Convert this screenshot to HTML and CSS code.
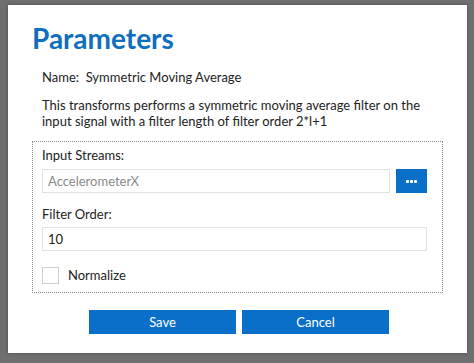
FILE: index.html
```html
<!DOCTYPE html>
<html>
<head>
<meta charset="utf-8">
<link rel="stylesheet" href="styles.css">
</head>
<body>
<div class="dialog">
  <h1 class="title">Parameters</h1>
  <div class="content">
    <p class="name">Name:&nbsp; Symmetric Moving Average</p>
    <p class="desc">This transforms performs a symmetric moving average filter on the input signal with a filter length of filter order 2*l+1</p>
  </div>
  <div class="group">
    <div class="label">Input Streams:</div>
    <div class="stream-row">
      <div class="input placeholder">AccelerometerX</div>
      <div class="browse"><span class="dot"></span><span class="dot"></span><span class="dot"></span></div>
    </div>
    <div class="label label-gap">Filter Order:</div>
    <div class="input value">10</div>
    <div class="check-row">
      <span class="checkbox"></span>
      <span class="check-label">Normalize</span>
    </div>
  </div>
  <div class="actions">
    <button class="btn">Save</button>
    <button class="btn">Cancel</button>
  </div>
</div>
</body>
</html>
```
FILE: styles.css
```css
html, body {
  margin: 0;
  padding: 0;
}
body {
  background: #6f6f6f;
  width: 474px;
  height: 363px;
  overflow: hidden;
  font-family: Lato, "Open Sans", sans-serif;
  font-size: 13px;
  line-height: 16px;
  color: #222;
}
.dialog {
  box-sizing: border-box;
  margin: 5px 0 0 8px;
  width: 459px;
  height: 348px;
  background: #fff;
  padding: 16px 0 0 24px;
  box-shadow: 0 0 3px rgba(0,0,0,0.35);
}
.title {
  margin: 0;
  font-size: 28px;
  line-height: 34px;
  font-weight: 700;
  color: #106ebe;
}
.content {
  padding-left: 10px;
}
.name {
  margin: 14px 0 0 0;
}
.desc {
  margin: 12px 0 0 0;
  width: 400px;
}
.group {
  box-sizing: border-box;
  margin-top: 12px;
  width: 411px;
  border: 1px dotted #888;
  padding: 5px 15px 9px 9px;
}
.label-gap {
  margin-top: 13px;
}
.stream-row {
  display: flex;
  gap: 6px;
  margin-top: 6px;
}
.input {
  box-sizing: border-box;
  height: 24px;
  border: 1px solid #e2e2e2;
  padding: 3px 5px;
  line-height: 16px;
  background: #fff;
}
.stream-row .input {
  flex: 1;
}
.placeholder {
  color: #8a8a8a;
}
.value {
  margin-top: 5px;
  color: #222;
}
.browse {
  box-sizing: border-box;
  width: 31px;
  height: 24px;
  background: #0a6fc8;
  display: flex;
  align-items: center;
  justify-content: center;
  gap: 1px;
}
.dot {
  width: 3px;
  height: 3px;
  background: #fff;
  border-radius: 1px;
}
.check-row {
  margin-top: 16px;
  display: flex;
  align-items: center;
  height: 16px;
}
.checkbox {
  box-sizing: border-box;
  width: 17px;
  height: 17px;
  border: 1px solid #cfcfcf;
  background: #fff;
}
.check-label {
  margin-left: 9px;
}
.actions {
  display: flex;
  gap: 6px;
  margin: 17px 0 0 57px;
}
.btn {
  width: 147px;
  height: 24px;
  border: none;
  background: #0a6fc8;
  color: #fff;
  font-family: Lato, "Open Sans", sans-serif;
  font-size: 13px;
  padding: 0;
}
```
